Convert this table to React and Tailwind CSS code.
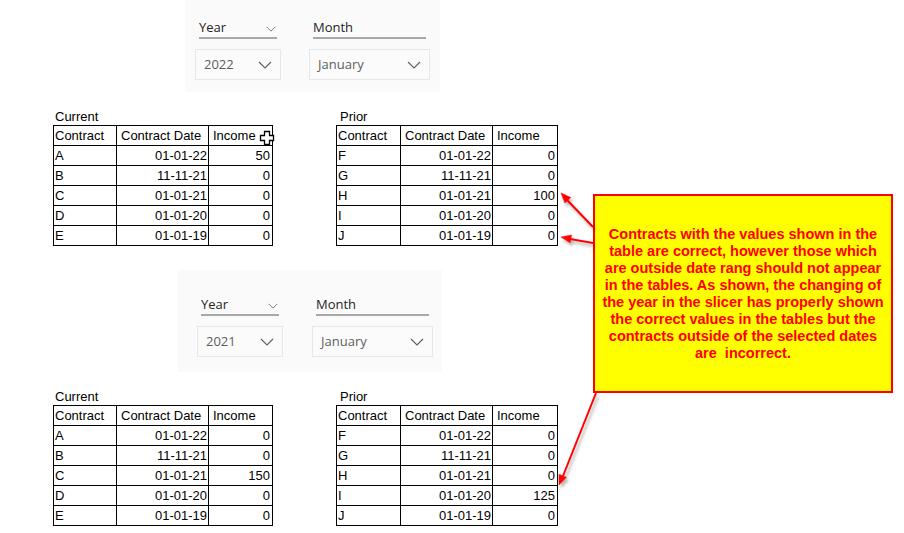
import React from 'react';

const currentTop = [
  ['A', '01-01-22', '50'],
  ['B', '11-11-21', '0'],
  ['C', '01-01-21', '0'],
  ['D', '01-01-20', '0'],
  ['E', '01-01-19', '0'],
];
const priorTop = [
  ['F', '01-01-22', '0'],
  ['G', '11-11-21', '0'],
  ['H', '01-01-21', '100'],
  ['I', '01-01-20', '0'],
  ['J', '01-01-19', '0'],
];
const currentBottom = [
  ['A', '01-01-22', '0'],
  ['B', '11-11-21', '0'],
  ['C', '01-01-21', '150'],
  ['D', '01-01-20', '0'],
  ['E', '01-01-19', '0'],
];
const priorBottom = [
  ['F', '01-01-22', '0'],
  ['G', '11-11-21', '0'],
  ['H', '01-01-21', '0'],
  ['I', '01-01-20', '125'],
  ['J', '01-01-19', '0'],
];

const note = [
  'Contracts with the values shown in the',
  'table are correct, however those which',
  'are outside date rang should not appear',
  'in the tables. As shown, the changing of',
  'the year in the slicer has properly shown',
  'the correct values in the tables but the',
  'contracts outside of the selected dates',
  'are  incorrect.',
];

const Chevron = ({ className }) => (
  <svg className={className} viewBox="0 0 14 8" fill="none" stroke="#605e5c" strokeWidth="1.1">
    <polyline points="1,1 7,7 13,1" />
  </svg>
);

const MoveCursor = () => (
  <svg className="absolute left-[50px] top-[4px] w-[16px] h-[16px]" viewBox="0 0 16 16">
    <path d="M5.5 1.5H10.5V5.5H14.5V10.5H10.5V14.5H5.5V10.5H1.5V5.5H5.5Z" fill="white" stroke="black" strokeWidth="1.3" />
  </svg>
);

// slicer pair: Year dropdown + Month dropdown
const Slicer = ({ year, className, gap }) => (
  <div className={`bg-[#fafafb] flex font-['Open_Sans',sans-serif] ${className}`}>
    <div className="w-[86px] flex flex-col">
      <div className="px-[4px]">
        <div className="flex items-center justify-between h-[18px] text-[13px] leading-[18px] text-[#252423]">
          <span>Year</span>
          <Chevron className="w-[10px] h-[6px] mt-[4px] mr-[1px]" />
        </div>
        <div className="mt-[1px] h-[2px] bg-[#a8a8a8]" />
      </div>
      <div className="mt-[10px] h-[31px] border border-[#e7e7e9] bg-[#fbfbfc] flex items-center justify-between pl-[8px] pr-[8px] pt-[1px]">
        <span className="text-[13px] text-[#605e5c]">{year}</span>
        <Chevron className="w-[14px] h-[8px]" />
      </div>
    </div>
    <div className={`w-[121px] flex flex-col ${gap}`}>
      <div className="px-[4px]">
        <div className="h-[18px] text-[13px] leading-[18px] text-[#252423]">Month</div>
        <div className="mt-[1px] h-[2px] bg-[#a8a8a8]" />
      </div>
      <div className="mt-[10px] h-[31px] border border-[#e7e7e9] bg-[#fbfbfc] flex items-center justify-between pl-[8px] pr-[8px] pt-[1px]">
        <span className="text-[13px] text-[#605e5c]">January</span>
        <Chevron className="w-[14px] h-[8px]" />
      </div>
    </div>
  </div>
);

const DataTable = ({ title, rows, cols, width, titlePad, cursor }) => (
  <div className={`flex flex-col ${width}`}>
    <div className={`h-[17px] leading-[17px] ${titlePad}`}>{title}</div>
    <div className={`grid ${cols} border-l border-t border-black`}>
      <div className="h-[20px] border-r border-b border-black pl-[1px] leading-[20px] whitespace-nowrap">Contract</div>
      <div className="h-[20px] border-r border-b border-black pl-[4px] leading-[20px] whitespace-nowrap">Contract Date</div>
      <div className="relative h-[20px] border-r border-b border-black pl-[4px] leading-[20px] whitespace-nowrap">
        Income
        {cursor && <MoveCursor />}
      </div>
      {rows.map((r, i) => (
        <React.Fragment key={i}>
          <div className="h-[20px] border-r border-b border-black pl-[1px] leading-[20px]">{r[0]}</div>
          <div className="h-[20px] border-r border-b border-black pr-[1px] text-right leading-[20px]">{r[1]}</div>
          <div className="h-[20px] border-r border-b border-black pr-[2px] text-right leading-[20px]">{r[2]}</div>
        </React.Fragment>
      ))}
    </div>
  </div>
);

export default function App() {
  return (
    <div className="relative w-[904px] h-[533px] bg-white overflow-hidden font-['Liberation_Sans',Arial,sans-serif] text-[13px] text-black">
      <div className="flex flex-col">
        <Slicer year="2022" className="ml-[185px] w-[255px] h-[92px] pl-[10px] pt-[18px]" gap="ml-[28px]" />

        <div className="flex mt-[16px] ml-[53px]">
          <DataTable title="Current" rows={currentTop} cols="grid-cols-[63px_92px_64px]" width="w-[220px]" titlePad="pl-[2px]" cursor />
          <div className="ml-[63px]">
            <DataTable title="Prior" rows={priorTop} cols="grid-cols-[64px_92px_65px]" width="w-[222px]" titlePad="pl-[4px]" />
          </div>
        </div>

        <Slicer year="2021" className="mt-[24px] ml-[178px] w-[264px] h-[102px] pl-[19px] pt-[25px]" gap="ml-[29px]" />

        <div className="flex mt-[16px] ml-[53px]">
          <DataTable title="Current" rows={currentBottom} cols="grid-cols-[63px_92px_64px]" width="w-[220px]" titlePad="pl-[2px]" />
          <div className="ml-[63px]">
            <DataTable title="Prior" rows={priorBottom} cols="grid-cols-[64px_92px_65px]" width="w-[222px]" titlePad="pl-[4px]" />
          </div>
        </div>
      </div>

      {/* callout note */}
      <div className="absolute left-[593px] top-[194px] w-[300px] h-[199px] bg-[#ffff00] border-2 border-[#ff0000] flex flex-col items-center justify-center font-['Liberation_Sans',Arial,sans-serif] font-bold text-[14.5px] leading-[17px] text-[#ff0000] text-center">
        {note.map((l, i) => (
          <span key={i} className="block whitespace-pre">{l}</span>
        ))}
      </div>

      {/* arrows */}
      <svg className="absolute inset-0 w-[904px] h-[533px] pointer-events-none" viewBox="0 0 904 533">
        <defs>
          <filter id="sh" x="-20%" y="-20%" width="140%" height="140%">
            <feDropShadow dx="2" dy="3" stdDeviation="1.5" floodColor="#000" floodOpacity="0.3" />
          </filter>
        </defs>
        <g filter="url(#sh)" fill="#ff0000" stroke="#ff0000">
          <line x1="593" y1="227" x2="567" y2="200" strokeWidth="2" />
          <polygon points="561,193 570.8,197.5 564.9,203" strokeWidth="0.5" />
          <line x1="593" y1="243" x2="570" y2="239" strokeWidth="2" />
          <polygon points="561,237 571.6,234.9 570.1,242.8" strokeWidth="0.5" />
          <line x1="596" y1="393" x2="563" y2="476" strokeWidth="2" />
          <polygon points="559,485 566.4,477.2 559,474.2" strokeWidth="0.5" />
        </g>
      </svg>
    </div>
  );
}
